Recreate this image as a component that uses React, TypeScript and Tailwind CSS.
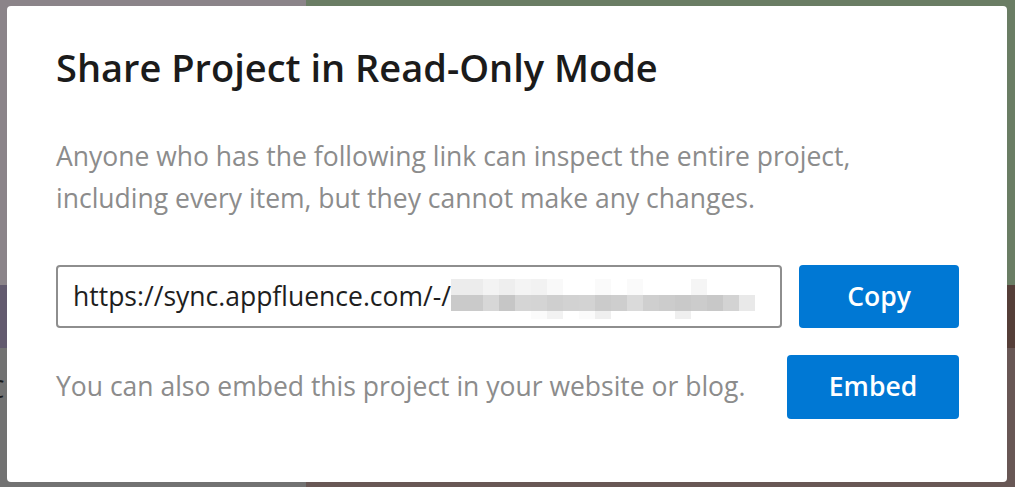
const font = { fontFamily: '"Open Sans", "Noto Sans", sans-serif' };

// pixelated (redacted) tail of the share link
const mosaic: string[][] = [
  ['bg-[#ececec]', 'bg-[#ececec]', 'bg-[#f3f3f3]', 'bg-[#eeeeee]', 'bg-[#f4f4f4]', 'bg-[#f2f2f2]', 'bg-[#f9f9f9]', 'bg-white', 'bg-white', 'bg-[#fafafa]', 'bg-white', 'bg-[#fafafa]', 'bg-white', 'bg-white', 'bg-white', 'bg-[#f5f5f5]', 'bg-white', 'bg-white', 'bg-white'],
  ['bg-[#cacaca]', 'bg-[#cacaca]', 'bg-[#d7d7d7]', 'bg-[#c6c6c6]', 'bg-[#d5d5d5]', 'bg-[#d4d4d4]', 'bg-[#cfcfcf]', 'bg-[#d2d2d2]', 'bg-[#d3d3d3]', 'bg-[#cbcbcb]', 'bg-[#cecece]', 'bg-[#dadada]', 'bg-[#cfcfcf]', 'bg-[#cccccc]', 'bg-[#c9c9c9]', 'bg-[#cccccc]', 'bg-[#c8c8c8]', 'bg-[#d3d3d3]', 'bg-[#e9e9e9]'],
  ['bg-white', 'bg-white', 'bg-white', 'bg-white', 'bg-white', 'bg-[#fbfbfb]', 'bg-[#f2f2f2]', 'bg-white', 'bg-[#fbfbfb]', 'bg-[#efefef]', 'bg-white', 'bg-white', 'bg-white', 'bg-white', 'bg-[#efefef]', 'bg-white', 'bg-white', 'bg-white', 'bg-white'],
];
const rowHeights = ['h-[16px]', 'h-[16px]', 'h-[8px]'];

function Redacted() {
  return (
    <div className="mt-[4px] flex flex-col">
      {mosaic.map((row, r) => (
        <div key={r} className={'flex ' + rowHeights[r]}>
          {row.map((c, i) => (
            <div key={i} className={'w-[16px] ' + c} />
          ))}
        </div>
      ))}
    </div>
  );
}

function Backdrop() {
  return (
    <div className="flex h-full flex-col">
      <div className="flex h-[285px]">
        <div className="w-[306px] bg-[#8b8489]" />
        <div className="flex-1 bg-[#6a7d64]" />
      </div>
      <div className="flex h-[63px]">
        <div className="w-[306px] bg-[#625a6e]" />
        <div className="flex-1 bg-[#553e38]" />
      </div>
      <div className="flex flex-1">
        <div className="w-[306px] bg-[#727272]" />
        <div className="flex-1 bg-[#685755]" />
      </div>
    </div>
  );
}

export default function App() {
  return (
    <div className="relative h-[487px] w-[1015px] overflow-hidden" style={font}>
      <Backdrop />
      {/* edge of a label peeking out from behind the dialog */}
      <span className="absolute left-[-12px] top-[368px] text-[26px] leading-[40px] text-[#1a1a1a]">C</span>

      <div className="absolute left-[7px] top-[6px] flex h-[476px] w-[1000px] flex-col rounded-[4px] bg-white pl-[49px] pr-[48px] pt-[39px]">
        <h1 className="text-[38px] font-semibold leading-[44px] text-[#1b1b1b]">
          Share Project in Read-Only Mode
        </h1>

        <p className="mt-[46px] text-[26.5px] leading-[42px] text-[#8c8c8c]">
          Anyone who has the following link can inspect the entire project,
          <br />
          including every item, but they cannot make any changes.
        </p>

        <div className="mt-[46px] flex h-[63px] gap-[17px]">
          <div className="flex flex-1 items-center rounded-[4px] border-2 border-[#8e8e8e] pl-[15px]">
            <span className="text-[26.5px] text-[#1e1e1e]">https://sync.appfluence.com/-/</span>
            <Redacted />
          </div>
          <button className="w-[160px] rounded-[4px] bg-[#0078d4] text-[26.5px] font-semibold text-white">
            Copy
          </button>
        </div>

        <div className="mt-[27px] flex h-[64px] items-center justify-between">
          <span className="text-[26.5px] text-[#8c8c8c]">
            You can also embed this project in your website or blog.
          </span>
          <button className="h-full w-[172px] rounded-[4px] bg-[#0078d4] text-[26.5px] font-semibold text-white">
            Embed
          </button>
        </div>
      </div>
    </div>
  );
}
